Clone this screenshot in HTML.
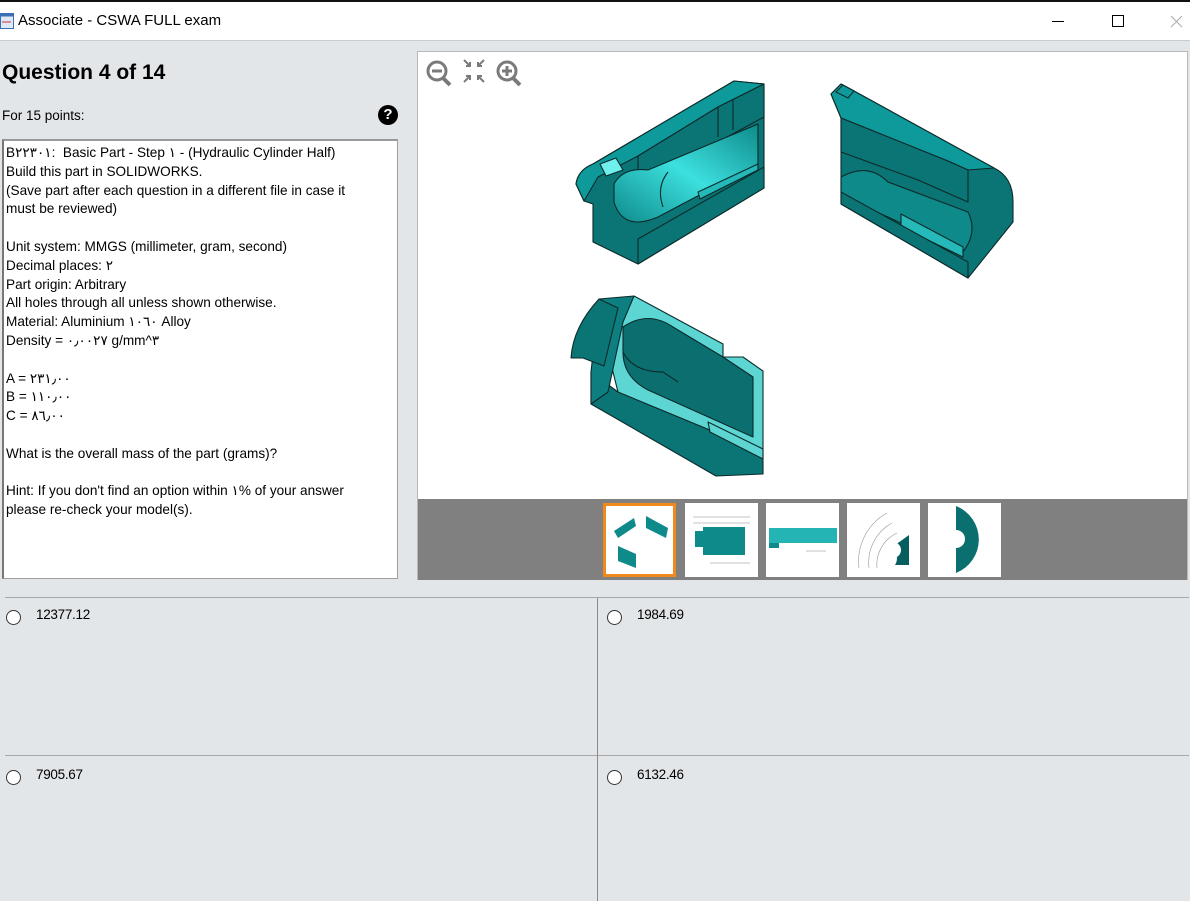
<!DOCTYPE html>
<html><head><meta charset="utf-8"><style>
*{margin:0;padding:0;box-sizing:border-box}
body{width:1190px;height:901px;background:#e3e6e9;font-family:"Liberation Sans","Noto Sans CJK SC",sans-serif;position:relative;overflow:hidden;color:#000}
.tb{position:absolute;left:0;top:0;width:1190px;height:41px;background:#fff;border-top:2px solid #111;border-bottom:1px solid #c9cccf}
.tb .t{position:absolute;left:18px;top:10px;font-size:15px}
.ab{position:absolute}
.txt{position:absolute;left:2px;top:139px;width:396px;height:440px;background:#fff;border:1px solid #a0a0a0;border-left:2px solid #777;border-top:2px solid #999;padding:3px 2px;font-size:13.6px;line-height:18.8px;white-space:pre}
.panel{position:absolute;left:417px;top:51px;width:771px;height:529px;background:#fff;border:1px solid #b8b8b8}
.strip{position:absolute;left:0;top:447px;width:769px;height:81px;background:#808080}
.th{position:absolute;top:4px;width:73px;height:74px;background:#fff}
.r{position:absolute;width:15px;height:15px;border:1.3px solid #333;border-radius:50%;background:#fff}
.ans{position:absolute;font-size:13.5px;letter-spacing:-0.3px}
</style></head><body>
<div class="tb">
<svg style="position:absolute;left:0;top:11px" width="14" height="16"><rect x="0.5" y="0.5" width="13" height="15" fill="#dfe8f5" stroke="#3a6fb5"/><rect x="0.5" y="0.5" width="13" height="3" fill="#3a6fb5"/><line x1="2" y1="9" x2="11" y2="9" stroke="#c33"/></svg>
<div class="t">Associate - CSWA FULL exam</div>
<div class="ab" style="left:1052px;top:19px;width:12px;height:1px;background:#000"></div>
<div class="ab" style="left:1112px;top:13px;width:12px;height:12px;border:1px solid #000"></div>
<svg class="ab" style="left:1170px;top:13px" width="13" height="13"><path d="M1 1L12 12M12 1L1 12" stroke="#aaa" stroke-width="1"/></svg>
</div>
<div class="ab" style="left:2px;top:61px;font-size:21px;font-weight:bold">Question 4 of 14</div>
<div class="ab" style="left:2px;top:108px;font-size:13.5px">For 15 points:</div>
<div class="ab" style="left:378px;top:105px;width:20px;height:20px;border-radius:50%;background:#000;color:#fff;font-weight:bold;font-size:15px;text-align:center;line-height:20px">?</div>
<div class="txt">B٢٢٣٠١:  Basic Part - Step ١ - (Hydraulic Cylinder Half)
Build this part in SOLIDWORKS.
(Save part after each question in a different file in case it
must be reviewed)

Unit system: MMGS (millimeter, gram, second)
Decimal places: ٢
Part origin: Arbitrary
All holes through all unless shown otherwise.
Material: Aluminium ١٠٦٠ Alloy
Density = ٠٫٠٠٢٧ g/mm^٣

A = ٢٣١٫٠٠
B = ١١٠٫٠٠
C = ٨٦٫٠٠

What is the overall mass of the part (grams)?

Hint: If you don't find an option within ١% of your answer
please re-check your model(s).</div>
<div class="panel">
<svg class="ab" style="left:5px;top:5px" width="110" height="32">
<g fill="none" stroke="#7a7a7a" stroke-width="3"><circle cx="14" cy="14" r="9"/><line x1="20" y1="21" x2="27" y2="28" stroke-width="4"/><line x1="9" y1="14" x2="19" y2="14"/>
<circle cx="84" cy="14" r="9"/><line x1="90" y1="21" x2="97" y2="28" stroke-width="4"/><line x1="79" y1="14" x2="89" y2="14"/><line x1="84" y1="9" x2="84" y2="19"/>
<g stroke-width="2"><path d="M41 3L47 9M47 5V9H43M61 3L55 9M55 5V9H59M41 25L47 19M43 19H47V23M61 25L55 19M59 19H55V23"/></g></g></svg>
<svg class="ab" style="left:0;top:0" width="769" height="447">
<defs><linearGradient id="g" x1="0" y1="1" x2="1" y2="0"><stop offset="0" stop-color="#0e8a8a"/><stop offset="0.5" stop-color="#3ce0df"/><stop offset="1" stop-color="#0e8a8a"/></linearGradient></defs>
<g stroke="#0c2a2a" stroke-width="1.1" stroke-linejoin="round">
<!-- part 1 -->
<path d="M158 132Q160 118 175 112L316 29L346 32L346 136L220 212L175 190L175 152L166 149Z" fill="#0b7475"/>
<path d="M158 132Q160 118 175 112L316 29L346 32L300 55L220 104L180 125L166 149Z" fill="#0e9a9a"/>
<path d="M182 112L198 106L205 118L188 124Z" fill="#6ff0ee"/>
<path d="M220 104L300 55L346 32L346 65L300 90L220 130Z" fill="#0b7475"/>
<path d="M300 55L300 85M315 48L315 78" fill="none"/>
<path d="M196 132Q205 115 230 118L340 72L340 112L240 165Q205 180 196 150Z" fill="url(#g)"/>
<path d="M250 120Q238 135 245 155" fill="none"/>
<path d="M280 140L340 112L340 118L282 147Z" fill="#25b9b9"/>
<path d="M220 187L346 115L346 136L220 212Z" fill="#0b7475"/>
<!-- part 2 -->
<path d="M423 66L413 42L423 32L436 39L576 116Q595 125 595 150L595 170L550 226L423 152Z" fill="#0b7475"/>
<path d="M423 66L413 42L423 32L436 39L576 116L550 118L530 109Z" fill="#0e9a9a"/>
<path d="M418 40L425 33L436 39L430 46Z" fill="#0e9a9a"/>
<path d="M423 66L530 109L550 118L550 150L500 128L423 100Z" fill="#0b7475"/>
<path d="M423 125Q450 110 470 130L550 160Q560 180 545 200L470 165L440 152Q425 148 423 140Z" fill="#0e8a8a"/>
<path d="M483 162L545 195L545 205L483 175Z" fill="#25b9b9"/>
<path d="M423 152L550 226L550 210L423 140Z" fill="#0b7475"/>
<!-- part 3 -->
<path d="M173 320L173 352L298 424L345 422L345 400L200 340Z" fill="#0b7475"/>
<path d="M216 244L305 292L305 305L325 305L345 319L345 400L200 340L190 300Z" fill="#5dd6d3"/>
<path d="M181 247L216 244L205 270L190 340L173 352L173 320Z" fill="#0e7f80"/>
<path d="M153 306Q155 275 181 247L200 256L186 314L165 306Z" fill="#0b7475"/>
<path d="M205 275Q230 258 255 275L305 305L335 325L335 385L230 338Q205 325 205 300Z" fill="#0b6f70"/>
<path d="M205 300Q215 320 245 320L260 330" fill="none"/>
<path d="M290 370L345 397L345 407L292 380Z" fill="#5dd6d3"/>
</g></svg>
<div class="strip">
<div class="th" style="left:185px;border:3px solid #f08a1c"><svg width="67" height="68"><g fill="#0e8a8a"><path d="M8 25L28 12L30 20L12 32Z"/><path d="M40 10L62 22L60 32L40 22Z"/><path d="M12 40L30 48L30 62L12 55Z"/></g></svg></div>
<div class="th" style="left:267px"><svg width="73" height="74"><rect x="18" y="24" width="42" height="28" fill="#0e8a8a"/><rect x="10" y="28" width="10" height="16" fill="#0e8a8a"/><g stroke="#888" stroke-width="0.5"><line x1="8" y1="14" x2="65" y2="14"/><line x1="8" y1="20" x2="65" y2="20"/><line x1="25" y1="60" x2="65" y2="60"/></g></svg></div>
<div class="th" style="left:348px"><svg width="73" height="74"><rect x="3" y="25" width="68" height="15" fill="#25b4b4"/><rect x="3" y="40" width="10" height="5" fill="#0e8a8a"/><line x1="40" y1="48" x2="60" y2="48" stroke="#888" stroke-width="0.5"/></svg></div>
<div class="th" style="left:429px"><svg width="73" height="74"><path d="M12 65A55 55 0 0 1 40 10M22 65A45 45 0 0 1 45 20M30 65A35 35 0 0 1 50 30" fill="none" stroke="#999" stroke-width="0.6"/><path d="M44 45L62 32V62L48 62A12 12 0 0 0 44 45Z" fill="#075e5f"/><circle cx="46" cy="47" r="8" fill="#fff"/></svg></div>
<div class="th" style="left:510px"><svg width="73" height="74"><path d="M28 3A36 36 0 0 1 28 70Z" fill="#0b6f70"/><circle cx="28" cy="36" r="9" fill="#fff"/></svg></div>
</div>
</div>
<div class="ab" style="left:5px;top:597px;width:1184px;height:1px;background:#a8a8a8"></div>
<div class="ab" style="left:5px;top:755px;width:1184px;height:1px;background:#a8a8a8"></div>
<div class="ab" style="left:597px;top:598px;width:1px;height:303px;background:#8a8a8a"></div>
<div class="r" style="left:6px;top:610px"></div><div class="ans" style="left:36px;top:607px">12377.12</div>
<div class="r" style="left:607px;top:610px"></div><div class="ans" style="left:637px;top:607px">1984.69</div>
<div class="r" style="left:6px;top:770px"></div><div class="ans" style="left:36px;top:767px">7905.67</div>
<div class="r" style="left:607px;top:770px"></div><div class="ans" style="left:637px;top:767px">6132.46</div>
</body></html>
